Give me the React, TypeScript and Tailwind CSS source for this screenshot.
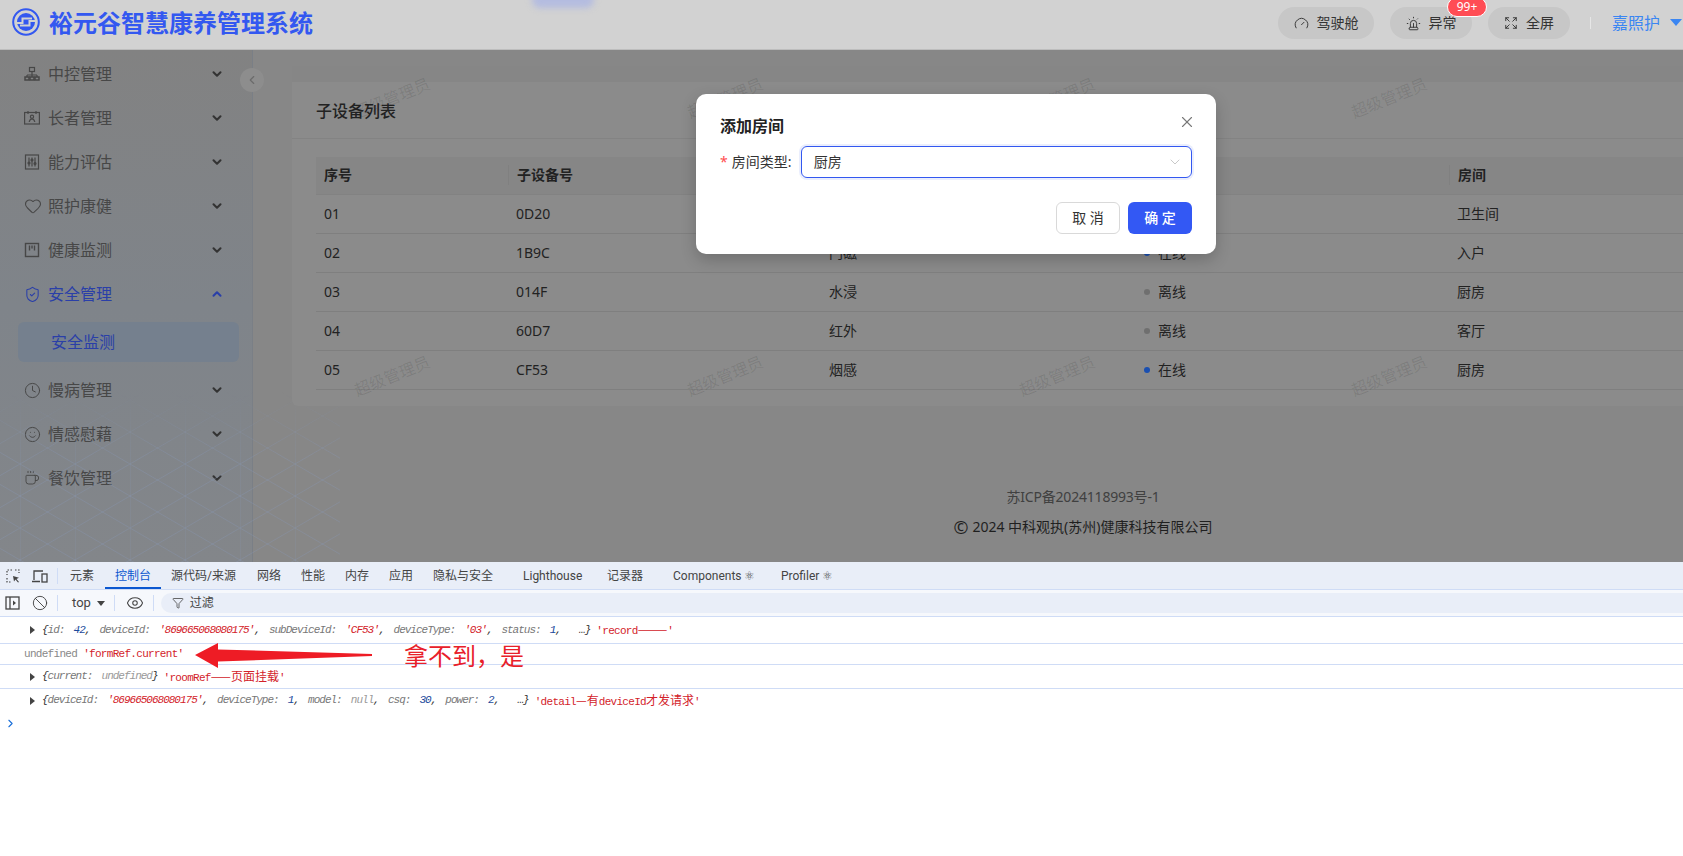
import { Ban, ChevronDown, ChevronLeft, ChevronRight, ChevronUp, Clock, Coffee, Expand, Eye, Filter, Gauge, Heart, ShieldCheck, Siren, Smile, X } from 'lucide-react'
import type { ReactNode } from 'react'

const uiFont = "[font-family:'Noto_Sans','Noto_Sans_CJK_SC',sans-serif]"

function GroupIcon() {
  return (
    <svg width="16" height="16" viewBox="0 0 16 16" fill="none" stroke="currentColor" strokeWidth="1.200">
      <rect x="5.500" y="1.500" width="5" height="4" />
      <path d="M8 5.500V9M3 9h10M3 9v2M13 9v2M8 9v2" />
      <rect x="1" y="11" width="4" height="3" strokeWidth="1.500" />
      <rect x="6" y="11" width="4" height="3" strokeWidth="1.500" />
      <rect x="11" y="11" width="4" height="3" strokeWidth="1.500" />
    </svg>
  )
}

function ElderIcon() {
  return (
    <svg width="16" height="16" viewBox="0 0 16 16" fill="none" stroke="currentColor" strokeWidth="1.200">
      <rect x="0.600" y="2.500" width="14.800" height="11.500" />
      <path d="M4 1v3M12 1v3" />
      <circle cx="8" cy="6.800" r="1.600" />
      <path d="M5.200 12c.4-2 1.400-3 2.800-3s2.400 1 2.800 3" />
    </svg>
  )
}

function AssessIcon() {
  return (
    <svg width="16" height="16" viewBox="0 0 16 16" fill="none" stroke="currentColor" strokeWidth="1.200">
      <rect x="1.500" y="1" width="13" height="14" />
      <path d="M5 3.500v9M8 3.500v9M11 3.500v9" />
      <circle cx="5" cy="9" r="1" fill="currentColor" />
      <circle cx="8" cy="6" r="1" fill="currentColor" />
      <circle cx="11" cy="9.500" r="1" fill="currentColor" />
    </svg>
  )
}

function MonitorIcon() {
  return (
    <svg width="16" height="16" viewBox="0 0 16 16" fill="none" stroke="currentColor" strokeWidth="1.400">
      <rect x="1.500" y="1.500" width="13" height="13" />
      <path d="M5.500 3.500v5M8 3.500v3M10.500 3.500v5" />
    </svg>
  )
}

const menu: { name: string; icon: ReactNode; open?: boolean }[] = [
  { name: '中控管理', icon: <GroupIcon /> },
  { name: '长者管理', icon: <ElderIcon /> },
  { name: '能力评估', icon: <AssessIcon /> },
  { name: '照护康健', icon: <Heart size={18} strokeWidth={1.400} /> },
  { name: '健康监测', icon: <MonitorIcon /> },
  { name: '安全管理', icon: <ShieldCheck size={17} strokeWidth={1.500} />, open: true },
  { name: '慢病管理', icon: <Clock size={17} strokeWidth={1.400} /> },
  { name: '情感慰藉', icon: <Smile size={17} strokeWidth={1.400} /> },
  { name: '餐饮管理', icon: <Coffee size={16} strokeWidth={1.400} /> },
]

const rows = [
  ['01', '0D20', '门磁', '在线', '卫生间'],
  ['02', '1B9C', '门磁', '在线', '入户'],
  ['03', '014F', '水浸', '离线', '厨房'],
  ['04', '60D7', '红外', '离线', '客厅'],
  ['05', 'CF53', '烟感', '在线', '厨房'],
]

const tabs = [
  { name: '元素', cls: 'w-[45px]' },
  { name: '控制台', cls: 'w-[56px]' },
  { name: '源代码/来源', cls: 'w-[86px]' },
  { name: '网络', cls: 'w-[44px]' },
  { name: '性能', cls: 'w-[44px]' },
  { name: '内存', cls: 'w-[44px]' },
  { name: '应用', cls: 'w-[44px]' },
  { name: '隐私与安全', cls: 'w-[90px]' },
  { name: 'Lighthouse', cls: 'w-[84px]' },
  { name: '记录器', cls: 'w-[66px]' },
  { name: 'Components ⚛', cls: 'w-[108px]' },
  { name: 'Profiler ⚛', cls: 'w-[70px]' },
]

const marks = [
  'left-[99px] top-[36px]',
  'left-[432px] top-[36px]',
  'left-[764px] top-[36px]',
  'left-[1096px] top-[36px]',
  'left-[99px] top-[314px]',
  'left-[432px] top-[314px]',
  'left-[764px] top-[314px]',
  'left-[1096px] top-[314px]',
]

function Pill({ icon, label, cls }: { icon: ReactNode; label: string; cls: string }) {
  return (
    <div className={`flex h-8 items-center justify-center gap-2 rounded-2xl bg-[#c7c7c7] text-sm text-[#333] ${cls}`}>
      {icon}
      {label}
    </div>
  )
}

const Key = ({ children }: { children: ReactNode }) => <span className="text-[#777]">{children}</span>
const Str = ({ children }: { children: ReactNode }) => <span className="text-[#d3222a]">{children}</span>
const Num = ({ children }: { children: ReactNode }) => <span className="text-[#1a4a9c]">{children}</span>
const Msg = ({ children }: { children: ReactNode }) => <span className="ml-[6px] tracking-[-0.7px] text-[#d3222a] not-italic">{children}</span>
const Cjk = ({ children }: { children: ReactNode }) => <span className="text-[12px] tracking-normal [font-family:'Noto_Sans_CJK_SC',sans-serif]">{children}</span>
const Tri = () => <span className="mr-[7px] ml-[6px] inline-block h-0 w-0 border-y-[4px] border-l-[5px] border-y-transparent border-l-[#444]" />

export default function App() {
  return (
    <div className={`relative flex h-[856px] w-[1683px] flex-col overflow-hidden bg-white ${uiFont}`}>
      {/* Header */}
      <header className="relative flex h-[50px] shrink-0 items-center border-b border-[#bdbdbd] bg-[#d2d2d2]">
        <span className="absolute top-[-8px] left-[532px] h-4 w-[62px] rounded-full bg-[#b4bce0] blur-[3px]" />
        <svg className="mt-[-6px] ml-3" width="28" height="28" viewBox="0 0 28 28" fill="none">
          <circle cx="14" cy="14" r="12.800" stroke="#3358f0" strokeWidth="2" />
          <circle cx="14" cy="14" r="9" fill="#3358f0" />
          <path d="M3 15H10.500V10.500H20M25 13H17.500V17.500H8" stroke="#d2d2d2" strokeWidth="2" />
        </svg>
        <h1 className="mt-[-4px] ml-[9px] text-2xl font-bold text-[#3358f0]">裕元谷智慧康养管理系统</h1>

        <div className="absolute top-[7px] left-[1278px] flex items-center gap-4">
          <Pill icon={<Gauge size={15} strokeWidth={1.500} />} label="驾驶舱" cls="w-[96px]" />
          <div className="relative">
            <Pill icon={<Siren size={15} strokeWidth={1.500} />} label="异常" cls="w-[82px]" />
            <span className="absolute top-[-10px] left-[57px] flex h-[20px] w-[40px] items-center justify-center rounded-full border border-white bg-[#ff4d55] text-xs text-white">
              99+
            </span>
          </div>
          <Pill icon={<Expand size={14} strokeWidth={1.600} />} label="全屏" cls="w-[82px]" />
          <span className="ml-1 h-3 w-px bg-[#e6e6e6]" />
          <span className="mt-[-1px] ml-[5px] flex items-center gap-[10px] text-base text-[#3b86f2]">
            嘉照护
            <span className="h-0 w-0 border-x-[6px] border-t-[7px] border-x-transparent border-t-[#3b86f2]" />
          </span>
        </div>
      </header>

      {/* Page under the mask */}
      <div className="relative flex h-[512px] shrink-0 overflow-hidden bg-[#878787]">
        <aside className="relative w-[253px] shrink-0 border-r border-[#7a7f86] bg-gradient-to-b from-[#828282] via-[#7f848a] to-[#83868a] pt-[2px]">
          {menu.map((m) => (
            <div key={m.name}>
              <div className={`flex h-11 items-center pr-[28px] pl-6 ${m.open ? 'text-[#2a3fa8]' : 'text-[#474747]'}`}>
                <span className="flex w-6 shrink-0">{m.icon}</span>
                <span className="flex-1 text-base">{m.name}</span>
                {m.open ? <ChevronUp size={14} strokeWidth={3.500} /> : <ChevronDown size={14} strokeWidth={3.500} className="text-[#333]" />}
              </div>
              {m.open && (
                <div className="mt-[6px] mr-[13px] mb-[6px] ml-[18px] flex h-10 items-center rounded-md bg-[#75808e] pl-[33px] text-base text-[#2a3fa8]">
                  安全监测
                </div>
              )}
            </div>
          ))}
          <button className="absolute top-[18px] right-[-12px] flex h-6 w-6 items-center justify-center rounded-full bg-[#8d8d8d] text-[#6b6b6b]">
            <ChevronLeft size={14} />
          </button>
        </aside>

        <svg className="pointer-events-none absolute bottom-0 left-0 [mask-image:linear-gradient(to_top,black_60%,transparent)]" width="340" height="170" fill="none">
          <defs>
            <pattern id="hex" width="55" height="64" patternUnits="userSpaceOnUse" x="20" y="8">
              <path d="M0 0V64M0 0L55 32L0 64M0 32L55 0M0 32L55 64" stroke="#8a9ab8" strokeOpacity="0.32" />
            </pattern>
          </defs>
          <rect width="340" height="170" fill="url(#hex)" />
        </svg>

        <main className="relative min-w-0 flex-1 pt-4 pl-[39px]">
          <div className="w-[1582px]">
            <div className="h-4 bg-[#868686]" />
            <section className="rounded-b-md bg-[#8b8b8b] pb-4">
              <h2 className="flex h-[57px] items-center border-b border-[#838383] pt-[2px] pl-6 text-base font-medium text-[#222]">子设备列表</h2>
              <div className="mx-6 mt-[18px] text-sm text-[#222]">
                <div className="grid h-[38px] grid-cols-[192px_313px_315px_313px_1fr] items-center border-b border-[#828282] bg-[#868686] pb-[2px] font-bold">
                  {['序号', '子设备号', '设备类型', '状态', '房间'].map((t, i) => (
                    <div key={t} className={`pl-2 ${i > 0 ? 'border-l border-[#808080]' : ''}`}>
                      {t}
                    </div>
                  ))}
                </div>
                {rows.map((r) => (
                  <div key={r[0]} className="grid h-[39px] grid-cols-[192px_313px_315px_313px_1fr] items-center border-b border-[#7f7f7f]">
                    <div className="pl-2">{r[0]}</div>
                    <div className="pl-2">{r[1]}</div>
                    <div className="pl-2">{r[2]}</div>
                    <div className="flex items-center gap-2 pl-2">
                      <span className={`h-[6px] w-[6px] rounded-full ${r[3] === '在线' ? 'bg-[#1a4fb0]' : 'bg-[#6f6f6f]'}`} />
                      {r[3]}
                    </div>
                    <div className="pl-2">{r[4]}</div>
                  </div>
                ))}
              </div>
            </section>
            <footer className="mt-[81px] flex flex-col items-center gap-[10px] text-sm">
              <div className="leading-5 tracking-[-0.2px] text-[#404040]">苏ICP备2024118993号-1</div>
              <div className="flex items-center gap-1 leading-5 text-[#1f1f1f]">
                <span className="text-lg leading-5">©</span> 2024 中科观执(苏州)健康科技有限公司
              </div>
            </footer>
          </div>
          {marks.map((c) => (
            <span key={c} className={`absolute -rotate-[22deg] text-base whitespace-nowrap text-black/10 ${c}`}>
              超级管理员
            </span>
          ))}
        </main>
      </div>

      {/* DevTools */}
      <div className="flex min-h-0 flex-1 flex-col bg-white [font-family:'Roboto','Noto_Sans_CJK_SC',sans-serif]">
        <div className="flex h-[28px] shrink-0 items-center border-b border-[#cfdcf6] bg-[#e9eef8] pt-[1px] text-xs text-[#444]">
          <svg className="ml-[5px]" width="16" height="16" viewBox="0 0 16 16" fill="none" stroke="#444" strokeWidth="1.200">
            <path d="M7 2H2v5M2 10v4h4M10 2h4v3" strokeDasharray="1.500 1.500" />
            <path d="M8 8l6 1.800-2.500 1.200 2.500 3-1 .5-2.500-3-1.500 2z" fill="#444" stroke="none" />
          </svg>
          <svg className="ml-[10px]" width="17" height="15" viewBox="0 0 17 15" fill="none" stroke="#444" strokeWidth="1.300">
            <path d="M3 11V2h9M1 12.500h8" />
            <rect x="11" y="5" width="5" height="8" />
          </svg>
          <span className="mr-[12px] ml-[9px] h-4 w-px bg-[#cfdcf6]" />
          {tabs.map((t) => (
            <div
              key={t.name}
              className={`flex h-full shrink-0 items-center whitespace-nowrap ${t.cls} ${t.name === '控制台' ? 'relative text-[#0b57d0]' : ''}`}
            >
              {t.name}
              {t.name === '控制台' && <span className="absolute bottom-0 left-[-10px] h-[2px] w-[56px] bg-[#0b57d0]" />}
            </div>
          ))}
        </div>
        <div className="flex h-[27px] shrink-0 items-center border-b border-[#cfdcf6] bg-[#f6f8fc] text-xs text-[#444]">
          <svg className="ml-[5px]" width="15" height="14" viewBox="0 0 15 14" fill="none" stroke="#444" strokeWidth="1.300">
            <rect x="1" y="1" width="13" height="12" />
            <path d="M5 1v12" />
            <path d="M8 4.500l3 2.500-3 2.500z" fill="#444" stroke="none" />
          </svg>
          <Ban size={16} strokeWidth={1.400} className="ml-[12px]" />
          <span className="mx-[9px] h-4 w-px bg-[#cfdcf6]" />
          <span className="ml-[5px] text-[13px]">top</span>
          <span className="ml-[6px] h-0 w-0 border-x-[4px] border-t-[5px] border-x-transparent border-t-[#444]" />
          <span className="mx-[9px] h-4 w-px bg-[#cfdcf6]" />
          <Eye size={18} strokeWidth={1.400} className="ml-[2px]" />
          <span className="mr-[7px] ml-[9px] h-4 w-px bg-[#cfdcf6]" />
          <div className="flex h-[20px] flex-1 items-center rounded-l-full bg-[#e9eef8] pl-[11px]">
            <Filter size={12} strokeWidth={1.600} />
            <span className="ml-[6px]">过滤</span>
          </div>
        </div>

        <div className="relative flex-1 text-[11px] tracking-[-1px] text-[#333] italic [font-family:'Liberation_Mono',monospace] [word-spacing:3.500px]">
          <div className="flex h-[27px] items-center border-b border-[#cfdcf6] pl-6">
            <Tri />
            <span className="whitespace-pre">
              {'{'}<Key>id:</Key> <Num>42</Num>, <Key>deviceId:</Key> <Str>'869665068080175'</Str>, <Key>subDeviceId:</Key> <Str>'CF53'</Str>, <Key>deviceType:</Key> <Str>'03'</Str>, <Key>status:</Key> <Num>1</Num>,  …{'}'}
            </span>
            <Msg>'record<Cjk>———</Cjk>'</Msg>
          </div>
          <div className="flex h-[21px] items-center border-b border-[#cfdcf6] pl-6 tracking-[-0.7px] not-italic">
            <span className="text-[#888]">undefined</span>
            <Msg>'formRef.current'</Msg>
          </div>
          <div className="flex h-[24px] items-center border-b border-[#cfdcf6] pl-6">
            <Tri />
            <span>
              {'{'}<Key>current:</Key> <span className="text-[#999]">undefined</span>{'}'}
            </span>
            <Msg>'roomRef<Cjk>——页面挂载</Cjk>'</Msg>
          </div>
          <div className="flex h-[23px] items-center pl-6">
            <Tri />
            <span className="whitespace-pre">
              {'{'}<Key>deviceId:</Key> <Str>'869665068080175'</Str>, <Key>deviceType:</Key> <Num>1</Num>, <Key>model:</Key> <span className="text-[#999]">null</span>, <Key>csq:</Key> <Num>30</Num>, <Key>power:</Key> <Num>2</Num>,  …{'}'}
            </span>
            <Msg>'detail<Cjk>—有</Cjk>deviceId<Cjk>才发请求</Cjk>'</Msg>
          </div>
          <ChevronRight size={13} className="mt-[5px] ml-[4px] text-[#1a6fd8]" />

          {/* Annotation drawn on the screenshot */}
          <svg className="absolute top-[21px] left-[190px]" width="190" height="36" viewBox="0 0 190 36">
            <path d="M5 17L28 5V11.500L182 16V18L28 23.500V30z" fill="#ee1c25" />
          </svg>
          <span className="absolute top-[22px] left-[404px] text-2xl tracking-normal text-[#e8202a] not-italic [font-family:'Noto_Sans_CJK_SC',sans-serif] [word-spacing:0]">
            拿不到，是
          </span>
        </div>
      </div>

      {/* Dialog */}
      <div className={`absolute top-[94px] left-[696px] flex h-[160px] w-[520px] flex-col rounded-[10px] bg-white px-6 pt-5 shadow-[0_6px_16px_rgba(0,0,0,0.2)] ${uiFont}`}>
        <div className="flex h-6 items-center justify-between">
          <h3 className="text-base font-bold text-[#222]">添加房间</h3>
          <X size={18} strokeWidth={1.500} className="mt-[-8px] mr-[-4px] text-[#777]" />
        </div>
        <div className="mt-2 flex items-center text-sm text-[#333]">
          <span className="mr-1 text-[#ff4d4f]">*</span>
          <label className="w-[69px] shrink-0 whitespace-nowrap">房间类型:</label>
          <div className="flex h-8 flex-1 items-center justify-between rounded-md border border-[#3358f0] pr-2 pl-3 shadow-[0_0_0_2px_rgba(51,88,240,0.1)]">
            厨房
            <ChevronDown size={16} strokeWidth={1.200} className="text-[#bbb]" />
          </div>
        </div>
        <div className="mt-6 flex justify-end gap-2 text-sm">
          <button className="h-8 w-16 rounded-md border border-[#d9d9d9] text-[#333]">取 消</button>
          <button className="h-8 w-[64px] rounded-md bg-[#3358f4] font-medium text-white">确 定</button>
        </div>
      </div>
    </div>
  )
}
